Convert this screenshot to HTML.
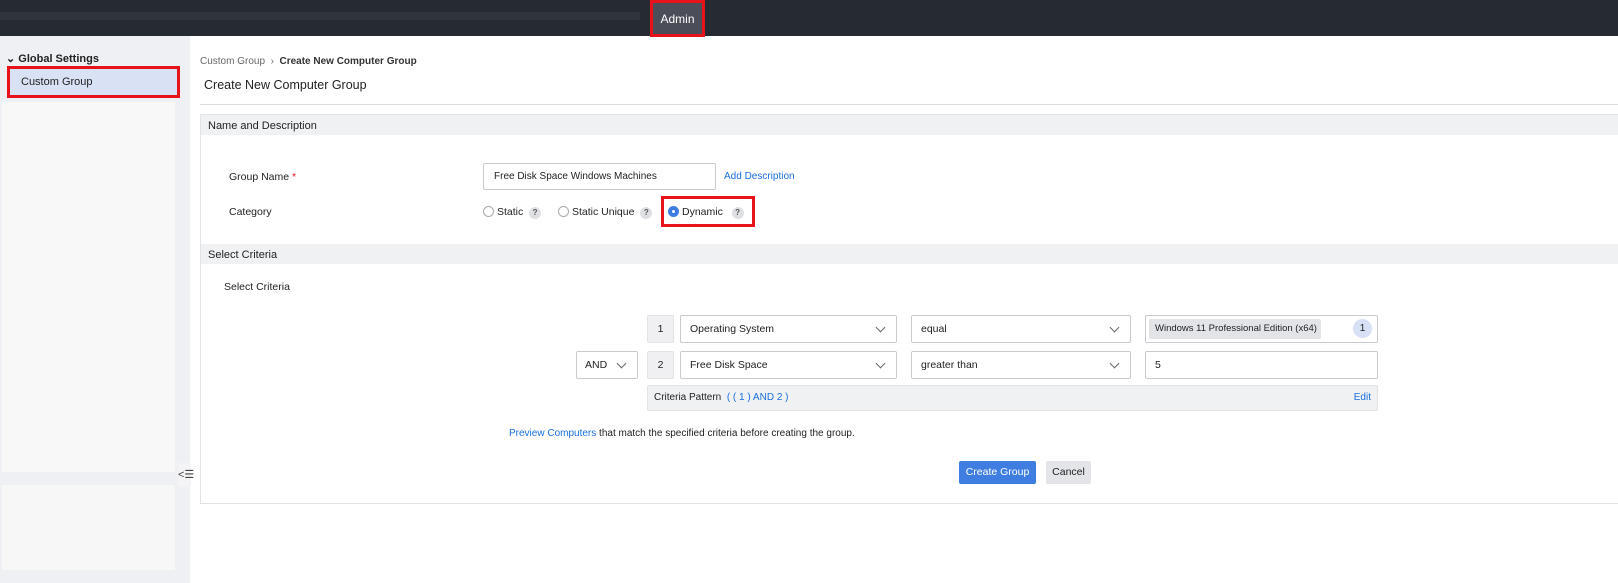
<!DOCTYPE html>
<html><head><meta charset="utf-8"><style>
*{box-sizing:border-box;margin:0;padding:0}
body{width:1618px;height:583px;overflow:hidden;background:#fff;font-family:"Liberation Sans",sans-serif;font-size:10.5px;color:#222;position:relative}
.a{position:absolute}
.top{left:0;top:0;width:1618px;height:36px;background:#262a33}
.sb{left:0;top:36px;width:190px;height:547px;background:#eff0f3}
.sbin{left:2px;top:102px;width:173px;height:370px;background:#f8f8f9}
.sbin2{left:2px;top:485px;width:173px;height:85px;background:#f7f7f8}
.box{border:1px solid #c9cad0;background:#fff;border-radius:2px}
.sel:after{content:"";position:absolute;right:12px;top:8px;width:6px;height:6px;border-right:1px solid #666;border-bottom:1px solid #666;transform:rotate(45deg)}
.num{background:#f0f0f2;border:1px solid #e2e3e6;border-radius:2px;text-align:center;line-height:26px}
.q{display:inline-block;width:12px;height:12px;border-radius:50%;background:#dfe0e4;color:#555;font-size:8px;text-align:center;line-height:12px;font-weight:bold}
.rad{display:inline-block;width:11px;height:11px;border-radius:50%;border:1px solid #aaa;vertical-align:-2px;margin-right:3px;background:#fff}
.blue{color:#1a6fe0}
.red{border:3px solid #e8121b}
</style></head><body>
<div class="a top"></div>
<div class="a" style="left:0;top:12px;width:640px;height:8px;background:#30343d"></div>
<div class="a" style="left:650px;top:0;width:55px;height:37px;background:#4b4e58;border:3px solid #e8121b;color:#fff;font-size:12px;text-align:center;line-height:33px">Admin</div>
<div class="a sb"></div>
<div class="a sbin"></div>
<div class="a sbin2"></div>
<div class="a" style="left:6px;top:52px;font-size:11px;font-weight:bold;color:#222">⌄ Global Settings</div>
<div class="a" style="left:7px;top:66px;width:173px;height:32px;background:#d9e1f4;border:3px solid #e8121b;padding-left:11px;line-height:26px;font-size:11px">Custom Group</div>
<div class="a" style="left:178px;top:463px;width:13px;height:24px;background:#f4f4f6;border-radius:3px;font-size:11px;color:#444;line-height:24px;text-align:center">&lt;☰</div>
<div class="a" style="left:200px;top:56px;font-size:10px;color:#666">Custom Group &nbsp;›&nbsp; <b style="color:#333">Create New Computer Group</b></div>
<div class="a" style="left:204px;top:78px;font-size:12.5px;color:#222">Create New Computer Group</div>
<div class="a" style="left:200px;top:104px;width:1418px;height:1px;background:#ddd"></div>
<div class="a" style="left:200px;top:114px;width:1418px;height:390px;border:1px solid #e2e3e6;border-right:none"></div>
<div class="a" style="left:201px;top:115px;width:1417px;height:20px;background:#f0f1f3;padding-left:7px;line-height:22px;font-size:11px">Name and Description</div>
<div class="a" style="left:229px;top:171px">Group Name <span style="color:#e8121b">*</span></div>
<div class="a box" style="left:483px;top:163px;width:233px;height:27px;padding-left:10px;line-height:25px;font-size:10px">Free Disk Space Windows Machines</div>
<div class="a blue" style="left:724px;top:171px;font-size:10px">Add Description</div>
<div class="a" style="left:229px;top:206px">Category</div>
<div class="a" style="left:483px;top:206px"><span class="rad"></span>Static &nbsp;<span class="q">?</span></div>
<div class="a" style="left:558px;top:206px"><span class="rad"></span>Static Unique &nbsp;<span class="q">?</span></div>
<div class="a red" style="left:661px;top:196px;width:94px;height:31px"></div>
<div class="a" style="left:668px;top:206px"><span class="rad" style="background:#3a7ae0;border-color:#3a7ae0;box-shadow:inset 0 0 0 3px #3a7ae0,inset 0 0 0 6px #fff"></span>Dynamic &nbsp;&nbsp;<span class="q">?</span></div>
<div class="a" style="left:201px;top:244px;width:1417px;height:20px;background:#f0f1f3;padding-left:7px;line-height:22px;font-size:11px">Select Criteria</div>
<div class="a" style="left:224px;top:281px">Select Criteria</div>
<div class="a num" style="left:647px;top:315px;width:27px;height:28px">1</div>
<div class="a num" style="left:647px;top:351px;width:27px;height:28px">2</div>
<div class="a box sel" style="left:680px;top:315px;width:217px;height:28px;padding-left:9px;line-height:27px">Operating System</div>
<div class="a box sel" style="left:680px;top:351px;width:217px;height:28px;padding-left:9px;line-height:27px">Free Disk Space</div>
<div class="a box sel" style="left:911px;top:315px;width:220px;height:28px;padding-left:9px;line-height:27px">equal</div>
<div class="a box sel" style="left:911px;top:351px;width:220px;height:28px;padding-left:9px;line-height:27px">greater than</div>
<div class="a box sel" style="left:576px;top:351px;width:62px;height:28px;padding-left:8px;line-height:27px">AND</div>
<div class="a box" style="left:1145px;top:315px;width:233px;height:28px"></div>
<div class="a" style="left:1149px;top:319px;width:172px;height:20px;background:#e3e4e8;border-radius:2px;padding-left:6px;line-height:20px;font-size:9.5px">Windows 11 Professional Edition (x64)</div>
<div class="a" style="left:1353px;top:319px;width:19px;height:19px;border-radius:50%;background:#d8e0f6;text-align:center;line-height:19px;font-size:10px">1</div>
<div class="a box" style="left:1145px;top:351px;width:233px;height:28px;padding-left:9px;line-height:26px">5</div>
<div class="a" style="left:647px;top:385px;width:731px;height:26px;background:#f0f1f3;border:1px solid #e2e3e6;border-radius:2px;padding-left:6px;line-height:24px;font-size:10px">Criteria Pattern &nbsp;<span class="blue">( ( 1 ) AND 2 )</span><span class="blue" style="position:absolute;right:6px">Edit</span></div>
<div class="a" style="left:509px;top:428px;font-size:10px"><span class="blue">Preview Computers</span> that match the specified criteria before creating the group.</div>
<div class="a" style="left:959px;top:461px;width:77px;height:23px;background:#3f7de0;color:#fff;border-radius:2px;text-align:center;line-height:23px;font-size:10.5px">Create Group</div>
<div class="a" style="left:1046px;top:461px;width:45px;height:23px;background:#e4e5e8;border-radius:2px;text-align:center;line-height:23px;font-size:10.5px">Cancel</div>
</body></html>
